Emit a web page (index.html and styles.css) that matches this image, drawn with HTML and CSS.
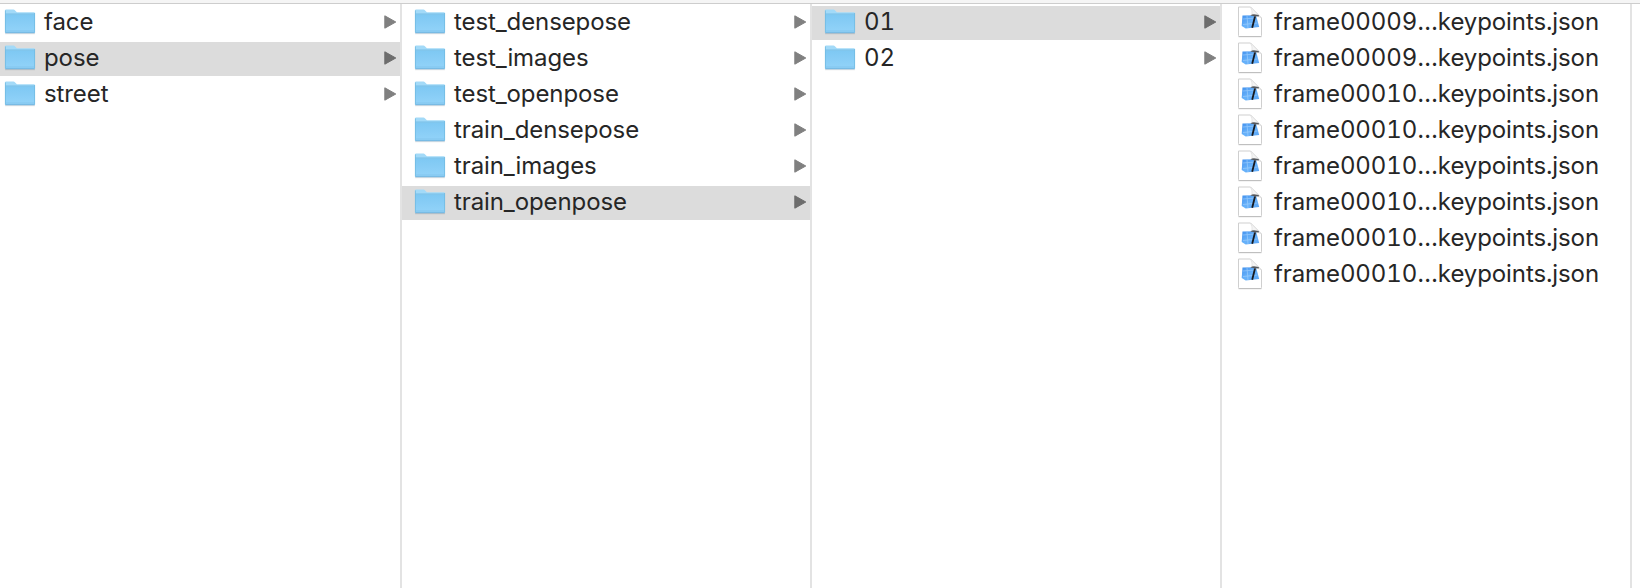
FILE: index.html
```
<!DOCTYPE html>
<html lang="en">
<head>
  <meta charset="UTF-8">
  <meta name="viewport" content="width=device-width, initial-scale=1.0">
  <title>pose</title>
  <link rel="stylesheet" href="styles.css">
</head>
<body>
  <svg class="defs" width="0" height="0">
    <defs>
      <linearGradient id="folder-front" x1="0" y1="0" x2="0" y2="1">
        <stop offset="0" stop-color="#7ec8f3"/>
        <stop offset="1" stop-color="#93d3f9"/>
      </linearGradient>
      <linearGradient id="blueprint" x1="0" y1="0" x2="1" y2="1">
        <stop offset="0" stop-color="#4291ee"/>
        <stop offset=".5" stop-color="#68b2fa"/>
        <stop offset="1" stop-color="#5aa5f5"/>
      </linearGradient>
      <symbol id="folder" viewBox="0 0 32 27">
        <path d="M1 25.200h30v1H1z" fill="#000" opacity=".13"/>
        <path d="M1 24.500V2.600Q1 1.500 2.100 1.500h7.400q.8 0 1.400.7l1.500 1.500q.5.5 1.300.5h16.100q1.200 0 1.200 1.200v19.100z" fill="#a3daf8"/>
        <path d="M1 6.500h30v17.600q0 .9-.9.9H1.900q-.9 0-.9-.9z" fill="url(#folder-front)"/>
        <path d="M1.300 6h29.400" stroke="#6bb7e2" stroke-width=".8"/>
        <path d="M1.400 2.500v22M30.600 5v19.500" stroke="#70b9e0" stroke-width=".8"/>
        <path d="M1.500 23h29" stroke="#7fc2ea" stroke-width=".8"/>
        <path d="M1.500 24.800h29" stroke="#69aed8" stroke-width=".9"/>
      </symbol>
      <symbol id="file" viewBox="0 0 26 32">
        <path d="M1.500 1h12L24.500 12v17.500q0 1-1 1h-21q-1 0-1-1z" fill="#fff" stroke="#cfcfcf"/>
        <path d="M1.500 30.700h23" stroke="#b5b5b5" stroke-width=".8"/>
        <path d="M13.500 1q2.200 3.500 1.500 8.500 5-.5 9.500 2.500z" fill="#f4f4f4" stroke="#dedede" stroke-width=".7"/>
        <path d="M5.500 9.500l13.500-.3 3.200 11.800-13.500 1.500-4-2.500z" fill="url(#blueprint)"/>
        <path d="M6 13l12-1M6 18.500l14.500-1.500M10 10l1 12" stroke="#a9d5ff" stroke-width=".8" opacity=".7"/>
        <path d="M18 10.500L15.200 21.800" stroke="#17191f" stroke-width="1.800"/>
        <path d="M13.300 9.600q2.200-1.700 5.200-1.100l3.300.6v1.500l-2.200-.3-1.500.8-1.900-1z" fill="#55595e"/>
      </symbol>
      <symbol id="arrow" viewBox="0 0 13 14">
        <path d="M.8 .8L11.800 7 .8 13.200z" fill="currentColor" stroke="currentColor" stroke-width="1" stroke-linejoin="round"/>
      </symbol>
    </defs>
  </svg>

  <div class="toolbar-edge"></div>
  <div class="browser">
    <ul class="column first">
      <li><svg class="folder"><use href="#folder"/></svg><span>face</span><svg class="arrow"><use href="#arrow"/></svg></li>
      <li class="selected"><svg class="folder"><use href="#folder"/></svg><span>pose</span><svg class="arrow"><use href="#arrow"/></svg></li>
      <li><svg class="folder"><use href="#folder"/></svg><span>street</span><svg class="arrow"><use href="#arrow"/></svg></li>
    </ul>
    <ul class="column">
      <li><svg class="folder"><use href="#folder"/></svg><span>test_densepose</span><svg class="arrow"><use href="#arrow"/></svg></li>
      <li><svg class="folder"><use href="#folder"/></svg><span>test_images</span><svg class="arrow"><use href="#arrow"/></svg></li>
      <li><svg class="folder"><use href="#folder"/></svg><span>test_openpose</span><svg class="arrow"><use href="#arrow"/></svg></li>
      <li><svg class="folder"><use href="#folder"/></svg><span>train_densepose</span><svg class="arrow"><use href="#arrow"/></svg></li>
      <li><svg class="folder"><use href="#folder"/></svg><span>train_images</span><svg class="arrow"><use href="#arrow"/></svg></li>
      <li class="selected"><svg class="folder"><use href="#folder"/></svg><span>train_openpose</span><svg class="arrow"><use href="#arrow"/></svg></li>
    </ul>
    <ul class="column">
      <li class="selected"><svg class="folder"><use href="#folder"/></svg><span>01</span><svg class="arrow"><use href="#arrow"/></svg></li>
      <li><svg class="folder"><use href="#folder"/></svg><span>02</span><svg class="arrow"><use href="#arrow"/></svg></li>
    </ul>
    <ul class="column">
      <li><svg class="file"><use href="#file"/></svg><span>frame00009…keypoints.json</span></li>
      <li><svg class="file"><use href="#file"/></svg><span>frame00009…keypoints.json</span></li>
      <li><svg class="file"><use href="#file"/></svg><span>frame00010…keypoints.json</span></li>
      <li><svg class="file"><use href="#file"/></svg><span>frame00010…keypoints.json</span></li>
      <li><svg class="file"><use href="#file"/></svg><span>frame00010…keypoints.json</span></li>
      <li><svg class="file"><use href="#file"/></svg><span>frame00010…keypoints.json</span></li>
      <li><svg class="file"><use href="#file"/></svg><span>frame00010…keypoints.json</span></li>
      <li><svg class="file"><use href="#file"/></svg><span>frame00010…keypoints.json</span></li>
    </ul>
  </div>
</body>
</html>
```
FILE: styles.css
```
* {
  box-sizing: border-box;
}
body {
  margin: 0;
  height: 100vh;
  display: flex;
  flex-direction: column;
  overflow: hidden;
  background: #fff;
  color: #262626;
  font-family: Inter, "Liberation Sans", sans-serif;
  font-size: 24px;
  font-variant-numeric: tabular-nums;
  letter-spacing: -0.1px;
}
.defs {
  flex: none;
}
.toolbar-edge {
  height: 4px;
  flex: none;
  background: #f5f5f5;
  border-bottom: 1px solid #cdcdcd;
}
.browser {
  flex: 1;
  display: flex;
}
.column {
  width: 410px;
  flex: none;
  display: flex;
  flex-direction: column;
  gap: 2px;
  margin: 0;
  padding: 2px 0 0;
  list-style: none;
  border-right: 2px solid #e3e3e3;
}
.column.first {
  width: 402px;
}
li {
  height: 34px;
  display: flex;
  align-items: center;
  padding: 0 3px 0 12px;
  white-space: nowrap;
}
.first li {
  padding-left: 4px;
}
li span {
  flex: 1;
  padding-bottom: 2px;
  line-height: 32px;
}
.selected {
  background: #dcdcdc;
}
.folder {
  width: 32px;
  height: 27px;
  flex: none;
  margin: 0 8px 3px 0;
}
.file {
  width: 26px;
  height: 32px;
  flex: none;
  margin: 0 11px 2px 3px;
}
.arrow {
  width: 13px;
  height: 14px;
  flex: none;
  margin-bottom: 2px;
  color: #808080;
}
.selected .arrow {
  color: #6d6d6d;
}
```
